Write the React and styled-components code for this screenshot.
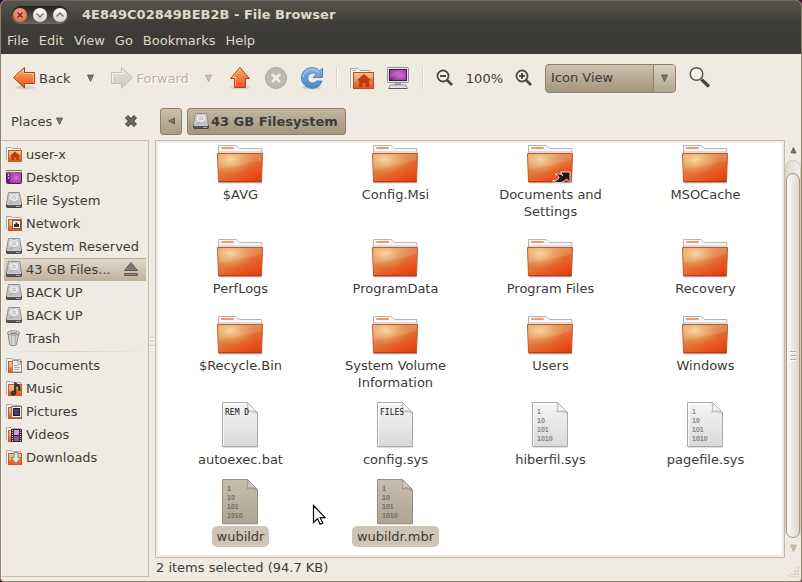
import React from "react";
import styled, { createGlobalStyle } from "styled-components";

const places = [
    { name: "user-x", icon: "home" },
    { name: "Desktop", icon: "desktop" },
    { name: "File System", icon: "drive" },
    { name: "Network", icon: "network" },
    { name: "System Reserved", icon: "drive" },
    { name: "43 GB Files...", icon: "drive", mounted: true },
    { name: "BACK UP", icon: "drive" },
    { name: "BACK UP", icon: "drive" },
    { name: "Trash", icon: "trash" },
];

const bookmarks = [
    { name: "Documents", icon: "documents" },
    { name: "Music", icon: "music" },
    { name: "Pictures", icon: "pictures" },
    { name: "Videos", icon: "videos" },
    { name: "Downloads", icon: "downloads" },
];

const files = [
    { name: "$AVG", type: "folder" },
    { name: "Config.Msi", type: "folder" },
    { name: "Documents and Settings", type: "folder", link: true },
    { name: "MSOCache", type: "folder" },
    { name: "PerfLogs", type: "folder" },
    { name: "ProgramData", type: "folder" },
    { name: "Program Files", type: "folder" },
    { name: "Recovery", type: "folder" },
    { name: "$Recycle.Bin", type: "folder" },
    { name: "System Volume Information", type: "folder" },
    { name: "Users", type: "folder" },
    { name: "Windows", type: "folder" },
    { name: "autoexec.bat", type: "text", preview: "REM D" },
    { name: "config.sys", type: "text", preview: "FILES" },
    { name: "hiberfil.sys", type: "binary" },
    { name: "pagefile.sys", type: "binary" },
    { name: "wubildr", type: "binary", selected: true },
    { name: "wubildr.mbr", type: "binary", selected: true },
];

// gradients shared by all the icons
function Gradients () {
    return (
        <Defs aria-hidden="true">
            <defs>
                <linearGradient id="orange" x1="0" y1="0" x2="0" y2="1">
                    <stop offset="0" stopColor="#f6b465" />
                    <stop offset="1" stopColor="#e8501c" />
                </linearGradient>
                <linearGradient id="folderFront" x1="0.2" y1="0" x2="0.9" y2="1">
                    <stop offset="0" stopColor="#e39a52" />
                    <stop offset="0.45" stopColor="#e0763a" />
                    <stop offset="0.8" stopColor="#ea4d18" />
                    <stop offset="1" stopColor="#d04315" />
                </linearGradient>
                <radialGradient id="folderGlow" cx="0.28" cy="0.2" r="0.55">
                    <stop offset="0" stopColor="#f8dca4" stopOpacity="0.9" />
                    <stop offset="1" stopColor="#f0a050" stopOpacity="0" />
                </radialGradient>
                <linearGradient id="paper" x1="0" y1="0" x2="0" y2="1">
                    <stop offset="0" stopColor="#f6f6f6" />
                    <stop offset="1" stopColor="#d9d9d9" />
                </linearGradient>
                <linearGradient id="paperDark" x1="0" y1="0" x2="0" y2="1">
                    <stop offset="0" stopColor="#c9bdae" />
                    <stop offset="1" stopColor="#afa493" />
                </linearGradient>
                <linearGradient id="metal" x1="0" y1="0" x2="0" y2="1">
                    <stop offset="0" stopColor="#e2e2e2" />
                    <stop offset="1" stopColor="#b4b4b4" />
                </linearGradient>
                <linearGradient id="blue" x1="0" y1="0" x2="0" y2="1">
                    <stop offset="0" stopColor="#80b3e6" />
                    <stop offset="1" stopColor="#4a86c6" />
                </linearGradient>
                <radialGradient id="purple" cx="0.65" cy="0.55" r="0.7">
                    <stop offset="0" stopColor="#d470cc" />
                    <stop offset="1" stopColor="#85208c" />
                </radialGradient>
                <linearGradient id="grayArrow" x1="0" y1="0" x2="0" y2="1">
                    <stop offset="0" stopColor="#e6e3dd" />
                    <stop offset="1" stopColor="#cfcac2" />
                </linearGradient>
            </defs>
        </Defs>
    );
}

function FolderIcon ({ link }) {
    return (
        <svg width="48" height="40" viewBox="0 0 48 40">
            <path d="M3 38.500h43" stroke="#000" strokeOpacity=".18" strokeWidth="2" />
            <path d="M2.500 10V1.500H19c1.500 0 2 .5 2.800 1.500s1.500 1.500 3 1.500h21V10z" fill="#f7f7f7" stroke="#b4b4b4" />
            <path d="M3 7h42v2H3z" fill="#dcdcdc" />
            <rect x="5" y="3" width="13" height="2" rx="1" fill="#f09a68" />
            <path d="M1.500 9.500h45l-1 28.500h-43z" fill="url(#folderFront)" stroke="#c9572a" />
            <path d="M2 10h44l-1 27.500h-42z" fill="url(#folderGlow)" />
            <path d="M2 10h44l-.3 6C34 19 18 23 2.300 25z" fill="#fff" fillOpacity=".12" />
            <path d="M3 37.500h42.500" stroke="#a02d0c" strokeOpacity=".6" />
            {link && <path d="M34.500 28H44v10.500L40.500 35c-4 4.500-10 4.500-14 1.500 3.500.3 5.800-.7 6.500-3-.5-2-2-3-4-3 3-1.300 6-.5 7.700 1z" fill="#231815" stroke="#fff" strokeWidth=".8" />}
        </svg>
    );
}

function FileIcon ({ type, preview, selected }) {
    return (
        <svg width="48" height="48" viewBox="0 0 48 48">
            <path d="M7 46.500h35" stroke="#000" strokeOpacity=".12" />
            <path d="M6.500 1.500H31.500L41.500 11.500V45.500H6.500z" fill={selected ? "url(#paperDark)" : "url(#paper)"} stroke={selected ? "#988f82" : "#a9a9a9"} />
            {!selected && <path d="M7.500 45V2.500H31" fill="none" stroke="#fff" strokeOpacity=".8" />}
            <path d="M30 3c2 3 1 6 0 9 4-1 8-1 11 2v-3L32 2z" fill="#000" fillOpacity=".1" />
            <path d="M31.500 1.500c.8 3 .5 6-.5 8.800 3.500-.8 7-.8 10.500 1.200z" fill={selected ? "#d3c8ba" : "#f8f8f8"} stroke={selected ? "#988f82" : "#a9a9a9"} strokeWidth=".8" />
            {type === "text" && <text x="9" y="14" fontFamily="DejaVu Sans Mono, monospace" fontSize="8" fill="#111">{preview}</text>}
            {type === "binary" && (
                <g fontFamily="Liberation Sans, sans-serif" fontSize="7" fontWeight="bold" fill={selected ? "#736a5f" : "#858585"}>
                    <text x="11" y="13">1</text>
                    <text x="11" y="22">10</text>
                    <text x="11" y="31">101</text>
                    <text x="11" y="40">1010</text>
                </g>
            )}
        </svg>
    );
}

function SmallFolder () {
    return (
        <>
            <path d="M.5 14.500V1.500h5l1.500 1h7.500v3" fill="#fafafa" stroke="#aaa" />
            <rect x="2.500" y="4.500" width="13" height="11" fill="url(#orange)" stroke="#c8592a" />
            <path d="M3 5h12v3L3 11z" fill="#fff" fillOpacity=".25" />
        </>
    );
}

function PlaceIcon ({ icon }) {
    if (icon === "drive") {
        return (
            <svg width="16" height="16" viewBox="0 0 16 16">
                <path d="M2.500.5h11l2 11v3q0 1-1 1h-13q-1 0-1-1v-3z" fill="url(#metal)" stroke="#8d8d8d" />
                <ellipse cx="8" cy="5.500" rx="5" ry="4" fill="#ededed" stroke="#b3b3b3" strokeWidth=".8" />
                <ellipse cx="8" cy="5.500" rx="2" ry="1.500" fill="#dadada" stroke="#a8a8a8" strokeWidth=".6" />
                <path d="M3.500 11L7 9.500" stroke="#999" strokeWidth=".8" />
                <path d="M.5 12.500h15v2q0 1-1 1h-13q-1 0-1-1z" fill="#555" stroke="#444" />
                <path d="M1 12.500h14" stroke="#ccc" />
                <path d="M10 14.500h4" stroke="#aaa" />
            </svg>
        );
    }
    if (icon === "desktop") {
        return (
            <svg width="16" height="16" viewBox="0 0 16 16">
                <rect x=".5" y="1.500" width="15" height="13" rx="1" fill="url(#purple)" stroke="#541a5b" />
                <path d="M0 1h16v3H0z" fill="#77765f" />
                <path d="M0 2h16v1H0z" fill="#e8e6c8" />
                <path d="M2.500 5v9" stroke="#6d1474" strokeWidth="2" />
                <path d="M2 5h1v2H2zM2 8h1v2H2z" fill="#d8a8da" />
            </svg>
        );
    }
    if (icon === "trash") {
        return (
            <svg width="16" height="16" viewBox="0 0 16 16">
                <path d="M2 3l1.500 11q.2 1.500 2 1.500h3q1.800 0 2-1.500L13 3z" fill="#d6d6d4" stroke="#8a8a86" />
                <path d="M5.500 6v8M9.500 6v8" stroke="#b3b3af" />
                <ellipse cx="7.500" cy="3" rx="6" ry="2.200" fill="#f4f4f2" stroke="#80807c" />
                <ellipse cx="7.500" cy="3.300" rx="4" ry="1" fill="#888" />
            </svg>
        );
    }
    return (
        <svg width="16" height="16" viewBox="0 0 16 16">
            <SmallFolder />
            {icon === "home" && <path d="M9 5.500l5 4.500h-1.200v4h-2.600v-2.500H8V14H5.300v-4H4z" fill="#b83c0d" />}
            {icon === "network" && <>
                <rect x="6.500" y="5.500" width="8" height="8" fill="#f2f2ee" stroke="#666" />
                <path d="M8 9h1.500V7.500h2V9H13v3H8z" fill="#333" />
            </>}
            {icon === "documents" && <>
                <path d="M6.500 3.500h6l3 3v8.500h-9z" fill="#efefef" stroke="#909090" />
                <path d="M12 3.500V7h3.500" fill="#fff" stroke="#909090" />
                <path d="M8 8.500h4M8 10.500h6M8 12.500h5" stroke="#aaa" />
            </>}
            {icon === "music" && <path d="M8.500 2.500l5.500 3v5h-1.500V7l-2.500-1.300V13c0 3-5 3-5 .3 0-1.800 2-2.300 3.500-1.800z" fill="#3e3d3a" stroke="#222" strokeWidth=".7" />}
            {icon === "pictures" && <>
                <rect x="5.500" y="3.500" width="10" height="11" fill="#f4f4f4" stroke="#777" />
                <rect x="7.500" y="5.500" width="6" height="7" fill="#4d3d62" stroke="#1d1825" />
            </>}
            {icon === "videos" && <>
                <rect x="5" y="3" width="11" height="13" fill="#302a34" />
                <path d="M8 4h5v5H8z" fill="#d39ad5" />
                <path d="M8 10h5v5H8z" fill="#8e5997" />
                <path d="M6.500 4v11M14.500 4v11" stroke="#d8d2da" strokeDasharray="1 1" />
            </>}
            {icon === "downloads" && <path d="M8 3.500h4v5h3L10 14.500 5 8.500h3z" fill="#e1e1df" stroke="#858582" />}
        </svg>
    );
}

function Arrow ({ left, up, soft }) {
    let d = "M1.500 2h6L4.500 8.500z";
    if (left) d = "M7.500 2v6L1.500 5z";
    if (up) d = "M2 8h5L4.500 2.500z";
    return (
        <svg width="9" height="10" viewBox="0 0 9 10">
            <path d={d} fill={soft ? "#c9bfa9" : "#77756c"} stroke={soft ? "#b5a88d" : "#56544c"} strokeWidth=".8" />
        </svg>
    );
}

function BackIcon () {
    return (
        <svg width="24" height="24" viewBox="0 0 24 24">
            <ellipse cx="13" cy="21.500" rx="10" ry="2" fill="#000" fillOpacity=".1" />
            <path d="M1.500 11.500L12.500 1.500V6.500H22.500V17.500H12.500V22z" fill="url(#orange)" stroke="#b63c12" />
            <path d="M3 11.500L11.500 3.700V7.500H21.500V16.500" fill="none" stroke="#ffd9a0" strokeOpacity=".7" />
        </svg>
    );
}

function ForwardIcon () {
    return (
        <svg width="24" height="24" viewBox="0 0 24 24">
            <path d="M22.500 11.500L11.500 1.500V6.500H1.500V17.500H11.500V22z" fill="url(#grayArrow)" stroke="#c3beb4" />
            <path d="M2.500 16.500V7.500H12.500V3.700" fill="none" stroke="#f8f5ef" />
        </svg>
    );
}

function UpIcon () {
    return (
        <svg width="24" height="24" viewBox="0 0 24 24">
            <ellipse cx="12" cy="21.500" rx="10" ry="2" fill="#000" fillOpacity=".1" />
            <path d="M12 1.500L21.500 12.500H17.500V21.500H6.500V12.500H2.500z" fill="url(#orange)" stroke="#b63c12" />
            <path d="M12 3L4.700 11.500H7.500V20.500" fill="none" stroke="#ffd9a0" strokeOpacity=".7" />
        </svg>
    );
}

function StopIcon () {
    return (
        <svg width="24" height="24" viewBox="0 0 24 24">
            <circle cx="12" cy="12" r="10.500" fill="#bfbab3" stroke="#aba69e" />
            <path d="M8 8l8 8M16 8l-8 8" stroke="#f2eee8" strokeWidth="2.600" />
        </svg>
    );
}

function ReloadIcon () {
    return (
        <svg width="24" height="24" viewBox="0 0 24 24">
            <ellipse cx="12" cy="21.500" rx="10" ry="2" fill="#000" fillOpacity=".1" />
            <path d="M22.500 2v9.500H13l3.300-3.300C12.500 5.500 7.800 8 7.800 12.200c0 5 6 6.500 8.700 2.800h5.500C20 20.500 16 22.500 12 22.300 6 22 1.500 17.500 1.500 12 1.500 3 12-1.800 19.600 4.700z" fill="url(#blue)" stroke="#457db9" strokeWidth=".9" />
            <path d="M3 11C4 3.500 13 .5 19.300 6.300" fill="none" stroke="#c3ddf6" strokeOpacity=".7" />
        </svg>
    );
}

function HomeIcon () {
    return (
        <svg width="24" height="24" viewBox="0 0 24 24">
            <path d="M.5 21.500V2.500h7.500l2 2h9.500V8" fill="#fafafa" stroke="#a9a9a9" />
            <path d="M2.500 4.500h4" stroke="#ee9b6c" />
            <rect x="3.500" y="6.500" width="20" height="16" fill="url(#orange)" stroke="#c04a1c" />
            <path d="M4 7h19v4L4 16z" fill="#fff" fillOpacity=".22" />
            <path d="M14 8l7.500 6.500H19V21h-3.500v-4h-3v4H9v-6.500H6.500z" fill="#bd3b10" />
        </svg>
    );
}

function ComputerIcon () {
    return (
        <svg width="24" height="24" viewBox="0 0 24 24">
            <rect x="1.500" y="1.500" width="21" height="15" rx="1" fill="#e6e6e4" stroke="#90908d" />
            <rect x="3.500" y="3.500" width="17" height="11" fill="url(#purple)" stroke="#44154a" />
            <path d="M4 4h16L4 12z" fill="#fff" fillOpacity=".15" />
            <path d="M9 17h6v2H9z" fill="#a6a6a4" />
            <path d="M4.500 19h15l2 3.500h-19z" fill="#e4e4e2" stroke="#8b8b88" />
            <path d="M3 22.500h18" stroke="#555" />
        </svg>
    );
}

function ZoomIcon ({ plus }) {
    return (
        <svg width="18" height="18" viewBox="0 0 18 18">
            <circle cx="7" cy="7" r="5.500" fill="#f6f3ee" stroke="#4a4945" strokeWidth="1.800" />
            <path d={plus ? "M4 7h6M7 4v6" : "M4 7h6"} stroke="#4a4945" strokeWidth="2" />
            <path d="M11 11l5 5" stroke="#4a4945" strokeWidth="2.600" />
        </svg>
    );
}

function SearchIcon () {
    return (
        <svg width="24" height="24" viewBox="0 0 24 24">
            <path d="M13.500 13.500l7.500 7" stroke="#44433f" strokeWidth="3.200" />
            <circle cx="8.500" cy="8" r="6.300" fill="#f3f1ee" stroke="#55544f" strokeWidth="1.500" />
            <path d="M4.500 7C5.500 4 8.500 3.500 10.500 4.500" fill="none" stroke="#fff" strokeWidth="1.500" />
        </svg>
    );
}

function Place ({ place }) {
    return (
        <li>
            <PlaceLink href="#" $active={place.mounted}>
                <PlaceIcon icon={place.icon} />
                <span>{place.name}</span>
                {place.mounted && (
                    <svg width="16" height="16" viewBox="0 0 16 16">
                        <path d="M8 1.500l6.500 8h-13z" fill="#7b7972" stroke="#5b5953" />
                        <path d="M1.500 12.500h13v2h-13z" fill="#8b8982" stroke="#5b5953" />
                    </svg>
                )}
            </PlaceLink>
        </li>
    );
}

function FileItem ({ file }) {
    return (
        <Item aria-pressed={!!file.selected}>
            <IconBox>
                {file.type === "folder" ? <FolderIcon link={file.link} /> : <FileIcon {...file} />}
            </IconBox>
            <Label $selected={file.selected}>{file.name}</Label>
        </Item>
    );
}

export default function App () {
    return (
        <>
            <GlobalStyle />
            <Gradients />
            <Window>
                <TitleBar>
                    <WindowButtons>
                        <RoundButton $close aria-label="Close">
                            <svg width="14" height="14" viewBox="0 0 14 14"><path d="M4.500 4.500l5 5M9.500 4.500l-5 5" stroke="#5b3a2b" strokeWidth="1.600" /></svg>
                        </RoundButton>
                        <RoundButton aria-label="Minimize">
                            <svg width="14" height="14" viewBox="0 0 14 14"><path d="M3.500 5.500L7 9l3.500-3.500" fill="none" stroke="#77746d" strokeWidth="1.500" /></svg>
                        </RoundButton>
                        <RoundButton aria-label="Maximize">
                            <svg width="14" height="14" viewBox="0 0 14 14"><path d="M3.500 8.500L7 5l3.500 3.500" fill="none" stroke="#77746d" strokeWidth="1.500" /></svg>
                        </RoundButton>
                    </WindowButtons>
                    <h1>4E849C02849BEB2B - File Browser</h1>
                </TitleBar>
                <MenuBar>
                    <button>File</button>
                    <button>Edit</button>
                    <button>View</button>
                    <button>Go</button>
                    <button>Bookmarks</button>
                    <button>Help</button>
                </MenuBar>
                <ToolBar>
                    <Group $gap={15}>
                        <ToolButton><BackIcon />Back</ToolButton>
                        <ToolButton aria-label="Back history"><Arrow /></ToolButton>
                        <ToolButton disabled><ForwardIcon />Forward</ToolButton>
                        <ToolButton disabled aria-label="Forward history"><Arrow soft /></ToolButton>
                        <Group $gap={12}>
                            <ToolButton aria-label="Up"><UpIcon /></ToolButton>
                            <ToolButton disabled aria-label="Stop"><StopIcon /></ToolButton>
                            <ToolButton aria-label="Reload"><ReloadIcon /></ToolButton>
                        </Group>
                    </Group>
                    <Divider />
                    <Group $gap={12}>
                        <ToolButton aria-label="Home"><HomeIcon /></ToolButton>
                        <ToolButton aria-label="Computer"><ComputerIcon /></ToolButton>
                    </Group>
                    <Divider />
                    <Group $gap={12}>
                        <ToolButton aria-label="Zoom out"><ZoomIcon /></ToolButton>
                        <span>100%</span>
                        <ToolButton aria-label="Zoom in"><ZoomIcon plus /></ToolButton>
                        <SelectBox>
                            <select aria-label="View as" defaultValue="icon">
                                <option value="icon">Icon View</option>
                                <option value="list">List View</option>
                                <option value="compact">Compact View</option>
                            </select>
                            <SelectArrow><Arrow /></SelectArrow>
                        </SelectBox>
                        <ToolButton aria-label="Search"><SearchIcon /></ToolButton>
                    </Group>
                </ToolBar>
                <Content>
                    <SideBar>
                        <SideHeader>
                            <ToolButton>Places<Arrow /></ToolButton>
                            <ToolButton aria-label="Close side pane">
                                <svg width="14" height="14" viewBox="0 0 14 14"><path d="M2.500 2.500l9 9M11.500 2.500l-9 9" stroke="#44433f" strokeWidth="4.400" /><path d="M2.800 2.800l8.400 8.400M11.200 2.800l-8.400 8.400" stroke="#6b6963" strokeWidth="2.400" /></svg>
                            </ToolButton>
                        </SideHeader>
                        <PlacesBox>
                            <ul>{places.map((place, i) => <Place key={i} place={place} />)}</ul>
                            <Separator />
                            <ul>{bookmarks.map(place => <Place key={place.name} place={place} />)}</ul>
                        </PlacesBox>
                    </SideBar>
                    <Splitter><i /><i /><i /></Splitter>
                    <Main>
                        <PathBar>
                            <PathButton aria-label="Previous folder"><Arrow left /></PathButton>
                            <PathButton $current><PlaceIcon icon="drive" />43 GB Filesystem</PathButton>
                        </PathBar>
                        <ViewRow>
                            <FileView>
                                <FileGrid>
                                    {files.map(file => <FileItem key={file.name} file={file} />)}
                                </FileGrid>
                            </FileView>
                            <ScrollBar>
                                <ScrollButton aria-label="Scroll up"><Arrow up /></ScrollButton>
                                <Trough>
                                    <Thumb><i /><i /><i /></Thumb>
                                </Trough>
                                <ScrollButton aria-label="Scroll down"><Arrow soft /></ScrollButton>
                            </ScrollBar>
                        </ViewRow>
                        <StatusBar>
                            2 items selected (94.7 KB)
                            <svg width="12" height="12" viewBox="0 0 12 12"><path d="M10 2v2M7 5v2M10 5v2M4 8v2M7 8v2M10 8v2M1 10v2M4 11v1M7 11v1M10 11v1" stroke="#d0c7b7" strokeWidth="1.500" /></svg>
                        </StatusBar>
                    </Main>
                </Content>
                <Pointer width="14" height="22" viewBox="0 0 14 22">
                    <path d="M1.500 1.500v17l4-3.800 2.700 5.600 2.600-1.300-2.600-5.300h5z" fill="#fff" stroke="#000" strokeWidth="1.200" />
                </Pointer>
            </Window>
        </>
    );
}

const GlobalStyle = createGlobalStyle`
    * {
        box-sizing: border-box;
    }

    body {
        margin: 0;
        background: linear-gradient(135deg, #2c0a20 50%, #a8527a);
        color: #3c3b37;
        font-family: "DejaVu Sans", sans-serif;
        font-size: 13px;
        line-height: 17px;
    }

    button, select {
        border: none;
        padding: 0;
        background: none;
        color: inherit;
        font: inherit;
    }

    svg {
        display: block;
        flex: none;
    }

    ul {
        list-style: none;
        margin: 0;
        padding: 0;
    }
`

const Defs = styled.svg`
    position: absolute;
    width: 0;
    height: 0;
`

const Window = styled.div`
    position: relative;
    display: flex;
    flex-direction: column;
    height: 100vh;
    min-height: 580px;
    overflow: hidden;
    border: 1px solid #8f8069;
    border-top: none;
    border-radius: 6px 6px 4px 4px;
    background-color: #efebe3;
`

const TitleBar = styled.header`
    display: flex;
    align-items: center;
    gap: 13px;
    height: 28px;
    padding-left: 10px;
    background: linear-gradient(#56544c, #3c3b37 90%);
    border-top: 1px solid #68665e;

    h1 {
        margin: 0;
        font-size: 13px;
        font-weight: bold;
        color: #dfd8c8;
    }
`

const WindowButtons = styled.div`
    display: flex;
    align-items: center;
    gap: 6px;
    height: 18px;
    padding: 0 2px;
    border-radius: 9px;
    background: linear-gradient(#22211f, #6b6961);
`

const RoundButton = styled.button`
    width: 14px;
    height: 14px;
    border-radius: 7px;
    background: ${({ $close }) => $close ? "radial-gradient(circle at 50% 30%, #f9a282, #e9602f)" : "linear-gradient(#fff, #d5d0c7)"};
`

const MenuBar = styled.nav`
    display: flex;
    align-items: center;
    gap: 10px;
    height: 26px;
    padding: 0 6px 2px;
    background-color: #3c3b37;
    color: #dfd8c8;
`

const ToolBar = styled.div`
    display: flex;
    align-items: center;
    height: 48px;
    padding-left: 11px;
`

const Group = styled.div`
    display: flex;
    align-items: center;
    gap: ${({ $gap }) => $gap}px;
`

const ToolButton = styled.button`
    display: flex;
    align-items: center;
    gap: 3px;

    &:disabled {
        color: #bfb29c;
        text-shadow: 1px 1px #fff;
    }
`

const Divider = styled.div`
    width: 2px;
    height: 22px;
    margin: 0 12px;
    background: linear-gradient(90deg, #dfd6c6 50%, #faf8f4 50%);
`

const SelectBox = styled.label`
    display: flex;
    align-items: center;
    position: relative;
    width: 131px;
    height: 29px;

    select {
        appearance: none;
        width: 100%;
        height: 100%;
        padding: 0 28px 2px 5px;
        border: 1px solid #8f8069;
        border-radius: 4px;
        background: linear-gradient(#cfc1af, #a3947d);
    }
`

const SelectArrow = styled.span`
    position: absolute;
    top: 1px;
    right: 1px;
    bottom: 1px;
    display: flex;
    align-items: center;
    justify-content: center;
    width: 22px;
    border-left: 1px solid #8f8069;
    border-radius: 0 3px 3px 0;
    background: linear-gradient(#ddd2c3, #b2a48e);
    pointer-events: none;
`

const Content = styled.div`
    display: flex;
    flex: 1;
    min-height: 0;
`

const SideBar = styled.aside`
    display: flex;
    flex-direction: column;
    width: 148px;
    padding-bottom: 4px;
`

const SideHeader = styled.div`
    display: flex;
    align-items: center;
    justify-content: space-between;
    height: 38px;
    padding: 0 11px 0 10px;
`

const PlacesBox = styled.nav`
    flex: 1;
    padding: 2px;
    border: 1px solid #c9bba5;
    border-left-color: #f8f6f1;
`

const PlaceLink = styled.a`
    display: flex;
    align-items: center;
    gap: 4px;
    height: 23px;
    padding: 0 7px 1px 2px;
    background: ${({ $active }) => $active ? "linear-gradient(#e3dace, #bfb09b)" : "none"};
    box-shadow: ${({ $active }) => $active ? "inset 0 1px #b8aa95" : "none"};
    color: inherit;
    text-decoration: none;
    white-space: nowrap;

    span {
        flex: 1;
    }
`

const Separator = styled.div`
    height: 2px;
    margin: 1px 0;
    background: linear-gradient(90deg, transparent, #ddd3c3, transparent) top / 100% 1px no-repeat;
`

const Splitter = styled.div`
    display: flex;
    flex-direction: column;
    align-items: center;
    justify-content: center;
    gap: 2px;
    width: 6px;

    i {
        width: 4px;
        height: 2px;
        border-top: 1px solid #cfc5b3;
        background-color: #fff;
    }
`

const Main = styled.main`
    display: flex;
    flex-direction: column;
    flex: 1;
    min-width: 0;
`

const PathBar = styled.div`
    display: flex;
    align-items: center;
    gap: 5px;
    height: 38px;
    padding-left: 5px;
`

const PathButton = styled.button`
    display: flex;
    align-items: center;
    justify-content: center;
    gap: 2px;
    height: 27px;
    min-width: 22px;
    padding: ${({ $current }) => $current ? "0 7px 0 5px" : "0"};
    border: 1px solid #8f8069;
    border-radius: 3px;
    background: ${({ $current }) => $current ? "linear-gradient(#c5b6a3, #a3947d)" : "linear-gradient(#cdbfad, #ab9c86)"};
    font-weight: bold;
`

const ViewRow = styled.div`
    display: flex;
    flex: 1;
    min-height: 0;
`

const FileView = styled.section`
    flex: 1;
    overflow: hidden;
    border: 1px solid #c9bba5;
    outline: 2px solid #efebe3;
    outline-offset: -3px;
    background-color: #fff;
`

/* the view is scrolled down a little, the top of the first row is cut */
const FileGrid = styled.div`
    display: grid;
    grid-template-columns: repeat(auto-fill, 139px);
    gap: 8px 16px;
    align-items: start;
    margin-top: -5px;
    padding-left: 15px;
`

const Item = styled.button`
    display: flex;
    flex-direction: column;
    align-items: center;
`

const IconBox = styled.span`
    display: flex;
    align-items: flex-end;
    height: 48px;
    padding-right: 1px;
`

const Label = styled.span`
    padding: 2px 5px;
    border-radius: 5px;
    background-color: ${({ $selected }) => $selected ? "#d0c4b4" : "transparent"};
    text-align: center;
`

const ScrollBar = styled.div`
    display: flex;
    flex-direction: column;
    width: 16px;
`

const ScrollButton = styled.button`
    display: flex;
    align-items: center;
    justify-content: center;
    height: 20px;
`

const Trough = styled.div`
    flex: 1;
    padding-top: 12px;
    border: 1px solid #d6cbb9;
    border-bottom: none;
    border-radius: 8px;
    background: linear-gradient(90deg, #e0d8ca, #f4f1eb);
`

const Thumb = styled.div`
    display: flex;
    flex-direction: column;
    align-items: center;
    justify-content: center;
    gap: 2px;
    height: 100%;
    border: 1px solid #a89a82;
    border-radius: 7px;
    background: linear-gradient(90deg, #fbfaf7, #dfd6c8);

    i {
        width: 6px;
        height: 2px;
        border-top: 1px solid #b9ac96;
        background-color: #fff;
    }
`

const StatusBar = styled.footer`
    display: flex;
    align-items: center;
    justify-content: space-between;
    height: 23px;
    padding: 0 1px 4px;

    svg {
        align-self: flex-end;
    }
`

const Pointer = styled.svg`
    position: absolute;
    left: 311px;
    top: 504px;
    pointer-events: none;
`
